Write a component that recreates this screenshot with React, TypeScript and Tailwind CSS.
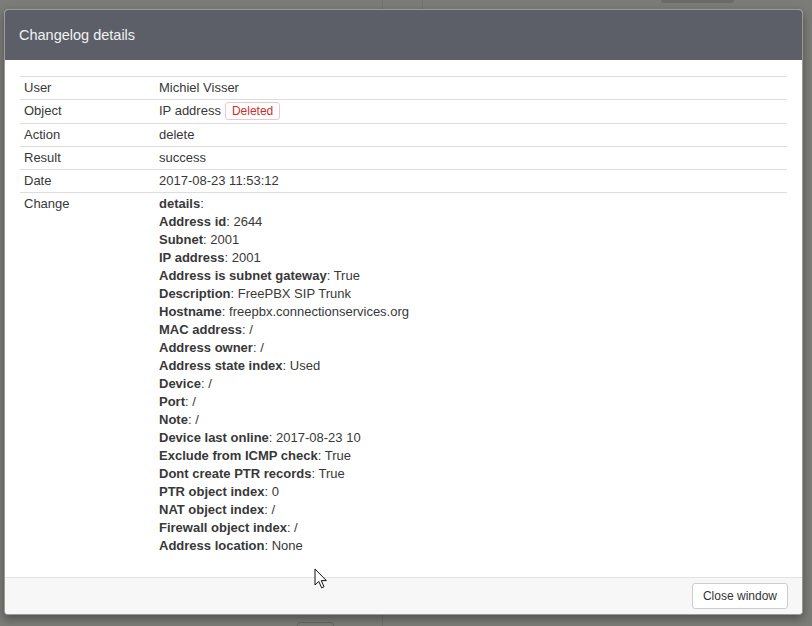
import React from 'react';

interface Row {
  label: string;
  value: React.ReactNode;
  tall?: boolean;
}

const changes: [string, string][] = [
  ['Address id', '2644'],
  ['Subnet', '2001'],
  ['IP address', '2001'],
  ['Address is subnet gateway', 'True'],
  ['Description', 'FreePBX SIP Trunk'],
  ['Hostname', 'freepbx.connectionservices.org'],
  ['MAC address', '/'],
  ['Address owner', '/'],
  ['Address state index', 'Used'],
  ['Device', '/'],
  ['Port', '/'],
  ['Note', '/'],
  ['Device last online', '2017-08-23 10'],
  ['Exclude from ICMP check', 'True'],
  ['Dont create PTR records', 'True'],
  ['PTR object index', '0'],
  ['NAT object index', '/'],
  ['Firewall object index', '/'],
  ['Address location', 'None'],
];

const rows: Row[] = [
  { label: 'User', value: 'Michiel Visser' },
  {
    label: 'Object',
    tall: true,
    value: (
      <span className="flex items-center gap-[4px]">
        IP address
        <span className="inline-block h-[18px] rounded-[3px] border border-[#f2c6c6] px-[6px] text-[12px] leading-[17px] text-[#c9302c]">
          Deleted
        </span>
      </span>
    ),
  },
  { label: 'Action', value: 'delete' },
  { label: 'Result', value: 'success' },
  { label: 'Date', value: '2017-08-23 11:53:12' },
];

const Cursor = () => (
  <svg className="absolute left-[314px] top-[568px]" width="14" height="22" viewBox="0 0 14 22">
    <path
      d="M1 1 L1 17 L4.8 13.4 L7.6 19.8 L10 18.8 L7.3 12.6 L12.4 12.6 Z"
      fill="#ffffff"
      stroke="#111111"
      strokeWidth="1"
      strokeLinejoin="round"
    />
  </svg>
);

export default function App() {
  return (
    <div
      className="relative h-[626px] w-[812px] overflow-hidden bg-[#7b7c78] text-[13px] text-[#383838]"
      style={{ fontFamily: '"Liberation Sans", Arial, sans-serif' }}
    >
      {/* faint page behind the overlay */}
      <div className="absolute left-[382px] top-0 h-[10px] w-[41px] border-x border-[#6f706c]" />
      <div className="absolute left-[661px] top-0 h-[3px] w-[73px] rounded-b-[3px] bg-[#6a6b67]" />
      <div className="absolute left-[382px] top-[614px] h-[12px] w-px bg-[#6f706c]" />
      <div className="absolute left-[297px] top-[622px] h-[6px] w-[37px] rounded-t-[3px] border border-[#666763]" />

      <div className="relative ml-[4px] mt-[9px] w-[799px] overflow-hidden rounded-[4px] border border-[#9a9a98] bg-white shadow-[0_4px_10px_rgba(0,0,0,0.35)]">
        <div className="flex h-[50px] items-center bg-[#5c5f67] pl-[14px] pt-[2px] text-[14.5px] text-[#f2f2f2]">
          Changelog details
        </div>

        <div className="px-[15px] pb-[20px] pt-[16px]">
          <div className="w-[767px]">
            {rows.map((r) => (
              <div
                key={r.label}
                className={`flex border-t border-[#dddddd] leading-[18px] ${r.tall ? 'pb-[3px] pt-[2px]' : 'py-[2px]'}`}
              >
                <div className="w-[135px] shrink-0 px-[4px]">{r.label}</div>
                <div className="px-[4px]">{r.value}</div>
              </div>
            ))}
            <div className="flex border-t border-[#dddddd] py-[2px] leading-[18px]">
              <div className="w-[135px] shrink-0 px-[4px]">Change</div>
              <div className="flex flex-col px-[4px]">
                <div>
                  <span className="font-bold">details</span>:
                </div>
                {changes.map(([k, v]) => (
                  <div key={k}>
                    <span className="font-bold">{k}</span>: {v}
                  </div>
                ))}
              </div>
            </div>
          </div>
        </div>

        <div className="flex h-[37px] items-center justify-end border-t border-[#e2e2e2] bg-[#f7f7f7] pr-[14px]">
          <button className="h-[26px] rounded-[3px] border border-[#cccccc] bg-white px-[10px] text-[12px] text-[#333]">
            Close window
          </button>
        </div>
      </div>

      <Cursor />
    </div>
  );
}
